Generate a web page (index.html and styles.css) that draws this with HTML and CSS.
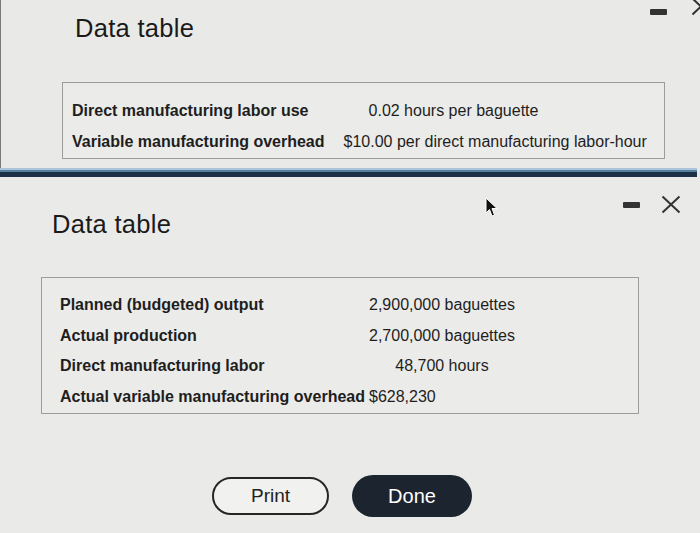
FILE: index.html
```html
<!DOCTYPE html>
<html>
<head>
<meta charset="utf-8">
<link rel="stylesheet" href="styles.css">
</head>
<body>
<div class="back-window">
  <span class="min-bar back-min"></span>
  <svg class="close-x back-close" width="20" height="19" viewBox="0 0 20 19"><path d="M1.5 1.5 L18.5 17.5 M18.5 1.5 L1.5 17.5" stroke="#333" stroke-width="2" fill="none"/></svg>
  <h1 class="title back-title">Data table</h1>
  <div class="table back-table">
    <div class="label">Direct manufacturing labor use</div>
    <div class="value indent">0.02 hours per baguette</div>
    <div class="label">Variable manufacturing overhead</div>
    <div class="value">$10.00 per direct manufacturing labor-hour</div>
  </div>
</div>
<div class="separator"></div>
<div class="front-window">
  <div class="win-controls front-controls">
    <span class="min-bar"></span>
    <svg class="close-x" width="20" height="19" viewBox="0 0 20 19"><path d="M1.5 1.5 L18.5 17.5 M18.5 1.5 L1.5 17.5" stroke="#333" stroke-width="2" fill="none"/></svg>
  </div>
  <svg class="cursor" width="14" height="21" viewBox="0 0 14 21"><path d="M1 1 L1 16 L4.5 12.5 L7 19 L9.5 18 L7 11.5 L12 11.5 Z" fill="#111" stroke="#fff" stroke-width="1"/></svg>
  <h1 class="title front-title">Data table</h1>
  <div class="table front-table">
    <div class="label">Planned (budgeted) output</div>
    <div class="value center">2,900,000 baguettes</div>
    <div class="label">Actual production</div>
    <div class="value center">2,700,000 baguettes</div>
    <div class="label">Direct manufacturing labor</div>
    <div class="value center">48,700 hours</div>
    <div class="label">Actual variable manufacturing overhead</div>
    <div class="value">$628,230</div>
  </div>
  <div class="buttons">
    <button class="btn btn-print">Print</button>
    <button class="btn btn-done">Done</button>
  </div>
</div>
</body>
</html>
```
FILE: styles.css
```css
html, body {
  margin: 0;
  padding: 0;
}
body {
  width: 700px;
  height: 533px;
  overflow: hidden;
  background: #e9e9e7;
  font-family: "Liberation Sans", Arial, sans-serif;
  color: #1e1e1e;
}
.back-window {
  position: relative;
  height: 168px;
  border-left: 1px solid #7a7a7a;
  box-sizing: border-box;
  padding-top: 13px;
}
.title {
  margin: 0;
  font-size: 25.5px;
  font-weight: normal;
  line-height: 30px;
  letter-spacing: 0.3px;
  color: #1a1a1a;
}
.back-title {
  margin-left: 74px;
}
.table {
  display: grid;
  grid-template-columns: max-content max-content;
  font-size: 16px;
  background: #ebebe9;
  border: 1px solid #9c9c9c;
  box-sizing: border-box;
}
.label {
  font-weight: bold;
}
.back-table {
  margin-top: 39px;
  margin-left: 61px;
  width: 603px;
  padding: 12px 9px 1px 9px;
  line-height: 31px;
  column-gap: 19px;
}
.indent {
  padding-left: 25px;
}
.center {
  text-align: center;
}
.separator {
  height: 2px;
  border-top: 2px solid #adc5da;
  border-bottom: 5px solid #1d3146;
  background: #55819f;
  margin-right: 3px;
}
.front-window {
  position: relative;
  padding-top: 32px;
  height: 356px;
  box-sizing: border-box;
  background: #eaeae8;
}
.front-title {
  margin-left: 52px;
}
.front-table {
  margin-top: 38px;
  margin-left: 41px;
  width: 598px;
  padding: 12px 18px 1px 18px;
  line-height: 30.5px;
  column-gap: 4px;
}
.min-bar {
  display: block;
  width: 17px;
  height: 6px;
  background: #333;
  border-radius: 1px;
}
.back-min {
  position: absolute;
  top: 9px;
  left: 649px;
}
.back-close {
  position: absolute;
  top: -3px;
  left: 690px;
}
.win-controls {
  position: absolute;
  display: flex;
  align-items: center;
}
.front-controls {
  top: 18px;
  left: 623px;
  gap: 21px;
}
.cursor {
  position: absolute;
  left: 485px;
  top: 20px;
}
.buttons {
  display: flex;
  align-items: center;
  gap: 23px;
  margin-top: 61px;
  margin-left: 212px;
}
.btn {
  font-family: "Liberation Sans", Arial, sans-serif;
  border-radius: 22px;
  box-sizing: border-box;
  cursor: pointer;
}
.btn-print {
  width: 117px;
  height: 38px;
  border: 2px solid #262626;
  background: #f1f1ef;
  color: #222;
  font-size: 19px;
}
.btn-done {
  width: 120px;
  height: 42px;
  border: none;
  background: #1c2430;
  color: #fff;
  font-size: 20px;
  font-weight: 500;
}
```
